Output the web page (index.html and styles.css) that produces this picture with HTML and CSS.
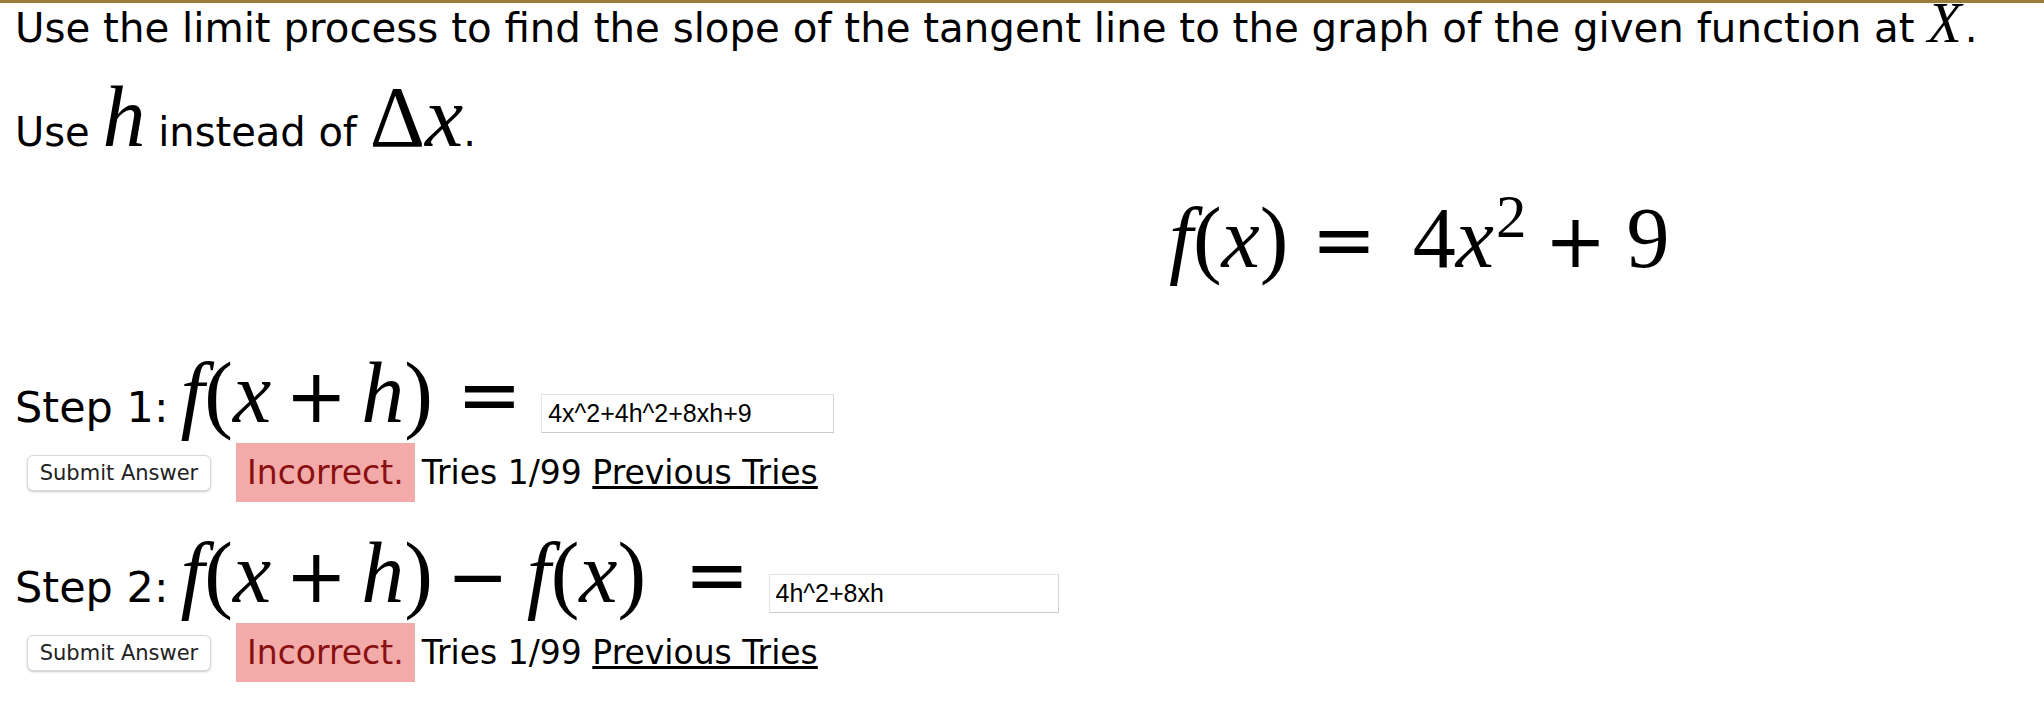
FILE: index.html
```html
<!DOCTYPE html>
<html>
<head>
<meta charset="utf-8">
<link rel="stylesheet" href="styles.css">
</head>
<body>
<div class="topbar"></div>
<div class="page">
  <p class="line1">Use the limit process to find the slope of the tangent line to the graph of the given function at <span class="mi mx">X</span>.</p>
  <p class="line2">Use <span class="mi big">h</span> instead of <span class="mo big delta">Δ</span><span class="mi big">x</span>.</p>
  <div class="display"><span class="mi">f</span><span class="mo">(</span><span class="mi">x</span><span class="mo">)</span><span class="eq">=</span><span class="mn">4</span><span class="mi">x</span><span class="sup">2</span><span class="bin">+</span><span class="mn">9</span></div>

  <div class="step">
    <span class="label">Step 1:</span><span class="math"><span class="mi">f</span><span class="mo">(</span><span class="mi">x</span><span class="bin">+</span><span class="mi">h</span><span class="mo">)</span><span class="eq">=</span></span><input class="answer a1" type="text" value="4x^2+4h^2+8xh+9">
  </div>
  <div class="controls">
    <button class="submit">Submit Answer</button>
    <span class="incorrect">Incorrect.</span>
    <span class="tries">Tries 1/99 <a class="prev" href="#">Previous Tries</a></span>
  </div>

  <div class="step">
    <span class="label">Step 2:</span><span class="math"><span class="mi">f</span><span class="mo">(</span><span class="mi">x</span><span class="bin">+</span><span class="mi">h</span><span class="mo">)</span><span class="bin minus">−</span><span class="mi">f</span><span class="mo">(</span><span class="mi">x</span><span class="mo">)</span><span class="eq eq2">=</span></span><input class="answer a2" type="text" value="4h^2+8xh">
  </div>
  <div class="controls">
    <button class="submit">Submit Answer</button>
    <span class="incorrect">Incorrect.</span>
    <span class="tries">Tries 1/99 <a class="prev" href="#">Previous Tries</a></span>
  </div>
</div>
</body>
</html>
```
FILE: styles.css
```css
html, body {
  margin: 0;
  padding: 0;
  background: #ffffff;
}
body {
  font-family: "DejaVu Sans", Verdana, sans-serif;
  color: #000;
}
.topbar {
  height: 3px;
  background: #9b7b3a;
}
.page {
  padding-left: 15px;
}
.line1 {
  margin: 0;
  font-size: 40.3px;
  line-height: 52px;
}
.line2 {
  margin: 51px 0 0 0;
  font-size: 40px;
  line-height: 52px;
}
.mi {
  font-family: "Liberation Serif", "Times New Roman", serif;
  font-style: italic;
  line-height: 0;
}
.mo, .mn {
  font-family: "Liberation Serif", "Times New Roman", serif;
  font-style: normal;
  line-height: 0;
}
.eq {
  font-family: "DejaVu Sans", sans-serif;
  font-size: 78px;
  line-height: 0;
}
.bin {
  font-family: "DejaVu Sans", sans-serif;
  font-size: 74px;
  line-height: 0;
  margin: 0 14px;
}
.line1 .mx {
  font-size: 56px;
  line-height: 40px;
  padding-right: 3px;
}
.big {
  font-size: 86px;
}
.display {
  margin-top: 30px;
  padding-left: 1154px;
  height: 100px;
  line-height: 100px;
  font-family: "Liberation Serif", "Times New Roman", serif;
  font-size: 86px;
  white-space: nowrap;
}
.display .eq {
  margin: 0 36px 0 23px;
}
.display .bin {
  margin: 0 20px 0 18px;
}
.sup {
  font-family: "Liberation Serif", serif;
  font-size: 61px;
  vertical-align: 0.5em;
  line-height: 0;
  margin-left: 2px;
}
.step {
  margin-top: 83px;
  height: 72px;
  line-height: 72px;
  font-size: 43px;
  white-space: nowrap;
}
.controls + .step {
  margin-top: 49px;
}
.math {
  font-family: "Liberation Serif", "Times New Roman", serif;
  font-size: 86px;
  line-height: 0;
  margin-left: 12px;
}
.math .eq {
  margin: 0 0 0 24px;
}
.math .minus {
  margin: 0 18px 0 14px;
}
.math .eq2 {
  margin-left: 38px;
}
.answer {
  font-family: "Liberation Sans", Arial, sans-serif;
  font-size: 25px;
  height: 39px;
  box-sizing: border-box;
  border: 1px solid #e3e3e3;
  border-bottom-color: #c9c9c9;
  border-right-color: #d2d2d2;
  padding: 0 6px;
  margin-left: 19px;
  color: #000;
  background: #fff;
  vertical-align: baseline;
}
.a1 { width: 293px; }
.a2 { width: 290px; }
.controls {
  display: flex;
  align-items: center;
  height: 59px;
}
.submit {
  font-family: "DejaVu Sans", Verdana, sans-serif;
  font-size: 21px;
  color: #222;
  background: #fff;
  border: 1px solid #d8d8d8;
  border-radius: 6px;
  box-shadow: 0 1px 2px rgba(0,0,0,0.22);
  width: 184px;
  height: 36px;
  padding: 0;
  margin-left: 12px;
}
.incorrect {
  background: #f3abaa;
  color: #8a1010;
  font-size: 33px;
  height: 59px;
  line-height: 59px;
  padding: 0 11px;
  margin-left: 25px;
}
.tries {
  font-size: 33px;
  margin-left: 7px;
}
.prev {
  color: #000;
  text-decoration: underline;
}
```
